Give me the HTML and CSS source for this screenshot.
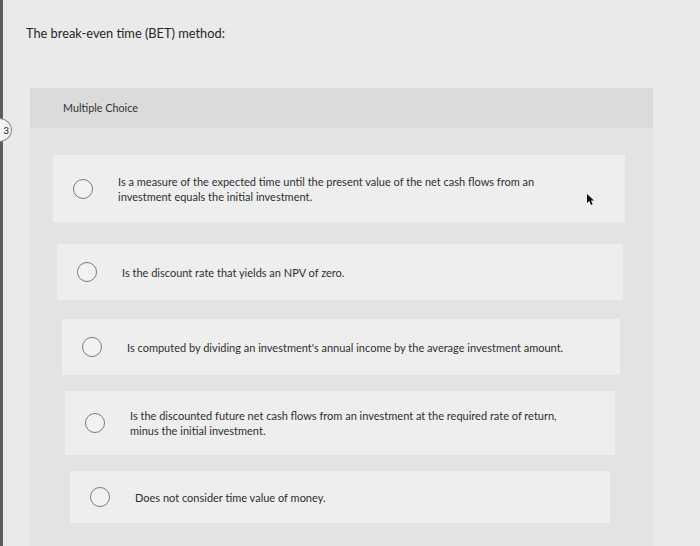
FILE: index.html
```html
<!DOCTYPE html>
<html lang="en">
<head>
    <meta charset="UTF-8">
    <meta name="viewport" content="width=device-width, initial-scale=1.0">
    <title>Question</title>
    <link rel="stylesheet" href="styles.css">
</head>
<body>
    <div class="badge">3</div>
    <div class="question">The break-even time (BET) method:</div>

    <div class="panel">
        <div class="panel-head">Multiple Choice</div>
        <div class="panel-body">
            <div class="option">
                <span class="radio"></span>
                <span class="option-text">Is a measure of the expected time until the present value of the net cash flows from an investment equals the initial investment.</span>
            </div>
            <div class="option">
                <span class="radio"></span>
                <span class="option-text">Is the discount rate that yields an NPV of zero.</span>
            </div>
            <div class="option">
                <span class="radio"></span>
                <span class="option-text">Is computed by dividing an investment's annual income by the average investment amount.</span>
            </div>
            <div class="option">
                <span class="radio"></span>
                <span class="option-text">Is the discounted future net cash flows from an investment at the required rate of return, minus the initial investment.</span>
            </div>
            <div class="option">
                <span class="radio"></span>
                <span class="option-text">Does not consider time value of money.</span>
            </div>
        </div>
    </div>

    <svg class="cursor" width="9" height="13" viewBox="0 0 9 13">
        <path d="M1 1 L1 10 L3.3 8 L5 12 L6.6 11.3 L5 7.6 L8 7.4 Z" fill="#111"/>
    </svg>
</body>
</html>
```

FILE: styles.css
```css
body {
    margin: 0;
    min-height: 546px;
    font-family: Lato, "Liberation Sans", sans-serif;
    background-color: #eaeaea; /* светло-серый фон экрана */
    color: #2b2b2b;
    border-left: 3px solid #5c5c5c; /* край монитора */
    overflow: hidden;
}
.badge {
    position: absolute;
    left: -14px;
    top: 118px;
    width: 22px;
    height: 22px;
    border: 1px solid #8a8a8a;
    border-radius: 50%;
    background-color: #f4f4f4;
    font-size: 10px;
    line-height: 22px;
    text-align: right;
    padding-right: 2px;
    box-sizing: content-box;
}
.question {
    padding: 25px 0 0 23px;
    font-size: 12.8px;
    line-height: 16px;
    color: #262626;
}
.panel {
    margin: 47px 47px 0 27px;
    background-color: #e3e3e3;
    min-height: 460px;
}
.panel-head {
    height: 40px;
    line-height: 40px;
    padding-left: 33px;
    font-size: 10.8px;
    color: #333;
    background-color: #dbdbdb;
}
.panel-body {
    display: flex;
    flex-direction: column;
    padding: 27px 0 0 0;
}
.option {
    display: flex;
    align-items: center;
    margin: 20px 28px 0 23px;
    padding: 18px 20px 18px 20px;
    background-color: #eeeeee;
    font-size: 11px;
    line-height: 15px;
    color: #2e2e2e;
}
/* фото снято под углом, карточки немного съезжают */
.option:nth-child(1) { margin-top: 0; padding-top: 19px; }
.option:nth-child(2) { margin-left: 27px; margin-right: 30px; margin-top: 22px; }
.option:nth-child(3) { margin-left: 32px; margin-right: 33px; margin-top: 19px; }
.option:nth-child(4) { margin-left: 35px; margin-right: 38px; margin-top: 16px; padding: 17px 20px; }
.option:nth-child(5) { margin-left: 40px; margin-right: 43px; margin-top: 16px; padding: 16px 20px; }
.radio {
    flex: none;
    width: 18px;
    height: 18px;
    border: 1.3px solid #7a7a7a;
    border-radius: 50%;
    background-color: #f2f2f2;
    margin-right: 25px;
}
.option-text {
    max-width: 440px;
}
.cursor {
    position: absolute;
    left: 586px;
    top: 193px;
}
```
